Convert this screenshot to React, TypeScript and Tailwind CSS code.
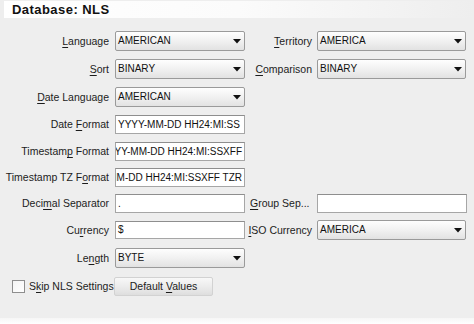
import React from "react";

const U = ({ children }: { children: React.ReactNode }) => (
  <span className="underline underline-offset-[1.5px] decoration-[1px]">{children}</span>
);

const Arrow = () => (
  <svg width="8" height="5" viewBox="0 0 8 5" className="shrink-0">
    <path d="M0 0 H8 L4 4.5 Z" fill="#111" />
  </svg>
);

const Combo = ({ value, w, h = "h-[20px]" }: { value: string; w: string; h?: string }) => (
  <div
    className={`${w} ${h} flex items-center justify-between pl-[2px] pr-[3px] border border-[#9a9a9a] rounded-[2px] bg-gradient-to-b from-[#fefefe] via-[#f1f1f1] to-[#e2e2e2] text-[10px] text-[#111]`}
  >
    <span className="leading-none">{value}</span>
    <Arrow />
  </div>
);

const Field = ({ value, w, h = "h-[19px]", end = false }: { value: string; w: string; h?: string; end?: boolean }) => (
  <div
    className={`${w} ${h} flex items-center ${end ? "justify-end" : "justify-start"} overflow-hidden px-[2px] border border-[#a6a6a6] border-t-[#8e8e8e] bg-white text-[10px] text-[#111]`}
  >
    <span className="leading-none whitespace-nowrap shrink-0">{value}</span>
  </div>
);

const Label = ({ children, w = "w-[115px]", pr = "pr-[6px]", align = "text-right" }: { children: React.ReactNode; w?: string; pr?: string; align?: string }) => (
  <div className={`${w} ${pr} ${align} shrink-0 text-[10.5px] text-[#1c1c1c] leading-none whitespace-nowrap`}>{children}</div>
);

export default function App() {
  return (
    <div
      className="w-[474px] h-[324px] bg-[#eeeeee] overflow-hidden flex flex-col"
      style={{ fontFamily: '"Liberation Sans", Arial, sans-serif' }}
    >
      <div className="ml-[4px] mt-[1px] h-[17px] shrink-0 bg-gradient-to-r from-white via-[#fbfbfb] to-[#eeeeee] flex items-center pl-[8px]">
        <span className="text-[13px] font-bold tracking-[0.45px] text-[#111] leading-none">Database: NLS</span>
      </div>

      {/* Row 1 */}
      <div className="flex items-center mt-[13px] h-[20px] shrink-0">
        <Label><U>L</U>anguage</Label>
        <Combo value="AMERICAN" w="w-[130px]" />
        <Label w="w-[72px]" pr="pr-[5px]"><U>T</U>erritory</Label>
        <Combo value="AMERICA" w="w-[149px]" />
      </div>

      {/* Row 2 */}
      <div className="flex items-center mt-[8px] h-[20px] shrink-0">
        <Label><U>S</U>ort</Label>
        <Combo value="BINARY" w="w-[130px]" />
        <Label w="w-[72px]" pr="pr-[5px]"><U>C</U>omparison</Label>
        <Combo value="BINARY" w="w-[149px]" />
      </div>

      {/* Row 3 */}
      <div className="flex items-center mt-[8px] h-[20px] shrink-0">
        <Label><U>D</U>ate Language</Label>
        <Combo value="AMERICAN" w="w-[130px]" />
      </div>

      {/* Row 4 */}
      <div className="flex items-center mt-[8px] h-[19px] shrink-0">
        <Label>Date <U>F</U>ormat</Label>
        <Field value="YYYY-MM-DD HH24:MI:SS" w="w-[130px]" />
      </div>

      {/* Row 5 */}
      <div className="flex items-center mt-[8px] h-[19px] shrink-0">
        <Label>Timestam<U>p</U> Format</Label>
        <Field value="YYYY-MM-DD HH24:MI:SSXFF" w="w-[130px]" end />
      </div>

      {/* Row 6 */}
      <div className="flex items-center mt-[7px] h-[19px] shrink-0">
        <Label>Timestamp TZ F<U>o</U>rmat</Label>
        <Field value="YYYY-MM-DD HH24:MI:SSXFF TZR" w="w-[130px]" end />
      </div>

      {/* Row 7 */}
      <div className="flex items-center mt-[7px] h-[19px] shrink-0">
        <Label>Deci<U>m</U>al Separator</Label>
        <Field value="." w="w-[130px]" />
        <Label w="w-[72px]" pr="pr-[0px] pl-[5px]" align="text-left"><U>G</U>roup Sep...</Label>
        <Field value="" w="w-[150px]" />
      </div>

      {/* Row 8 */}
      <div className="flex items-center mt-[7px] h-[20px] shrink-0">
        <Label>Cu<U>r</U>rency</Label>
        <Field value="$" w="w-[130px]" h="h-[18px]" />
        <Label w="w-[72px]" pr="pr-[5px]"><U>I</U>SO Currency</Label>
        <Combo value="AMERICA" w="w-[149px]" />
      </div>

      {/* Row 9 */}
      <div className="flex items-center mt-[8px] h-[20px] shrink-0">
        <Label>Le<U>n</U>gth</Label>
        <Combo value="BYTE" w="w-[130px]" />
      </div>

      {/* Row 10 */}
      <div className="flex items-center mt-[9px] h-[19px] shrink-0">
        <div className="w-[114px] shrink-0 flex items-center pl-[12px]">
          <div className="w-[13px] h-[13px] border border-[#8e8e8e] bg-gradient-to-br from-[#f4f4f4] to-white shrink-0" />
          <span className="ml-[4px] text-[10.5px] text-[#1c1c1c] leading-none whitespace-nowrap">
            S<U>k</U>ip NLS Settings
          </span>
        </div>
        <div className="w-[99px] h-[19px] flex items-center justify-center border border-[#d2d2d2] rounded-[2px] bg-gradient-to-b from-[#f8f8f8] via-[#ececec] to-[#dedede] text-[10.5px] text-[#1c1c1c] leading-none">
          <span>Default <U>V</U>alues</span>
        </div>
      </div>

      <div className="flex-1" />
      <div className="h-[6px] shrink-0 bg-gradient-to-b from-[#f6f6f6] to-white" />
    </div>
  );
}
